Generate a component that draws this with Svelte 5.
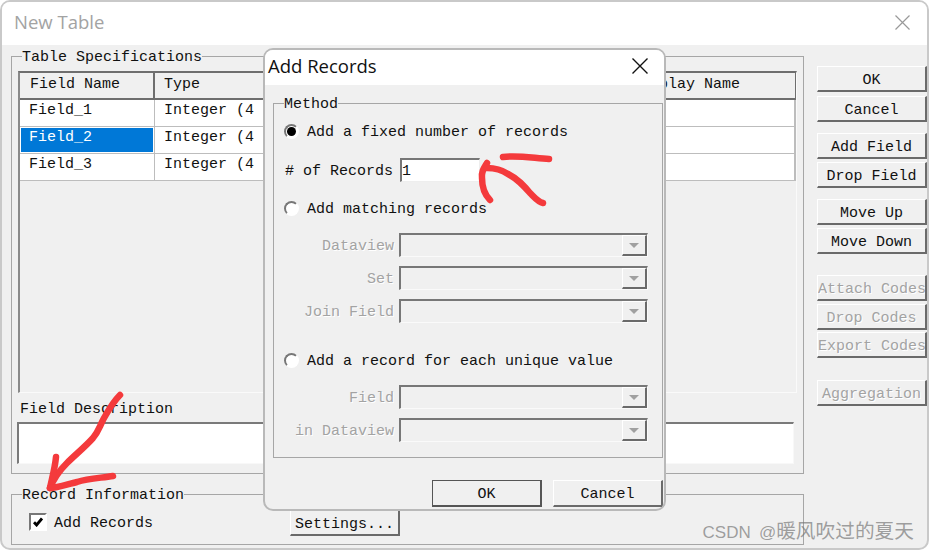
<script>
  const rows = [
    { name: 'Field_1', selected: false },
    { name: 'Field_2', selected: true },
    { name: 'Field_3', selected: false }
  ];
  const sideGroups = [
    { cls: 'g0', items: [{ t: 'OK' }, { t: 'Cancel' }] },
    { cls: 'g1', items: [{ t: 'Add Field' }, { t: 'Drop Field' }] },
    { cls: 'g2', items: [{ t: 'Move Up' }, { t: 'Move Down' }] },
    { cls: 'g3', items: [{ t: 'Attach Codes', d: true }, { t: 'Drop Codes', d: true }, { t: 'Export Codes', d: true }] },
    { cls: 'g4', items: [{ t: 'Aggregation', d: true }] }
  ];
</script>

{#snippet combo(label)}
  <div class="combo-row">
    <span class="combo-label">{label}</span>
    <div class="combo"><span class="combo-arrow"><i></i></span></div>
  </div>
{/snippet}

{#snippet radio(label, on)}
  <div class="radio-row">
    <span class="radio">{#if on}<i></i>{/if}</span>
    <span class="radio-text">{label}</span>
  </div>
{/snippet}

<div class="window">
  <header class="titlebar">
    <span class="win-title">New Table</span>
    <svg class="win-close" width="15" height="15" viewBox="0 0 15 15"><path d="M0.5 0.5L14.5 14.5M14.5 0.5L0.5 14.5" stroke="#999" stroke-width="1.2" fill="none"/></svg>
  </header>

  <div class="body">
    <div class="left">
      <fieldset class="group spec">
        <legend>Table Specifications</legend>
        <div class="table">
          <div class="thead">
            <span class="c1">Field Name</span>
            <span class="c2">Type</span>
            <span class="c3">Display Name</span>
          </div>
          {#each rows as r}
            <div class="trow">
              <span class="c1 cell"><b class:sel={r.selected}>{r.name}</b></span>
              <span class="c2 cell">Integer (4</span>
              <span class="c3 cell"></span>
            </div>
          {/each}
        </div>
        <div class="desc-label">Field Description</div>
        <div class="desc"></div>
      </fieldset>

      <fieldset class="group rec">
        <legend>Record Information</legend>
        <div class="rec-row">
          <span class="check">
            <svg width="10" height="10" viewBox="0 0 10 10"><path d="M1 5.2L3.6 8L9 1.4" stroke="#000" stroke-width="2.8" fill="none"/></svg>
          </span>
          <span class="check-label">Add Records</span>
          <button class="btn">Settings...</button>
        </div>
      </fieldset>
    </div>

    <aside class="side">
      {#each sideGroups as g}
        <div class="side-group {g.cls}">
          {#each g.items as b}
            <button class="btn" class:disabled={b.d}>{b.t}</button>
          {/each}
        </div>
      {/each}
    </aside>
  </div>

  <div class="dialog">
    <header class="dlg-title">
      <span class="dlg-text">Add Records</span>
      <svg width="16" height="16" viewBox="0 0 16 16"><path d="M0.5 0.5L15.5 15.5M15.5 0.5L0.5 15.5" stroke="#111" stroke-width="1.4" fill="none"/></svg>
    </header>
    <fieldset class="group method">
      <legend>Method</legend>
      {@render radio('Add a fixed number of records', true)}
      <div class="count-row">
        <span class="count-label"># of Records</span>
        <div class="count-input">1</div>
      </div>
      <div class="m15">{@render radio('Add matching records', false)}</div>
      <div class="combos">
        {@render combo('Dataview')}
        {@render combo('Set')}
        {@render combo('Join Field')}
      </div>
      <div class="m26">{@render radio('Add a record for each unique value', false)}</div>
      <div class="combos">
        {@render combo('Field')}
        {@render combo('in Dataview')}
      </div>
    </fieldset>
    <footer class="dlg-actions">
      <button class="btn default">OK</button>
      <button class="btn">Cancel</button>
    </footer>
  </div>

  <svg class="ink" width="929" height="550" viewBox="0 0 929 550" aria-hidden="true">
    <g fill="none" stroke="#f43a3c" stroke-width="6.5" stroke-linecap="round" stroke-linejoin="round">
      <path d="M120 395C112 403 108 411 103 420C99 428 98 432 93 438C85 447 75 455 67 463C60 470 54 478 50 488"/>
      <path d="M56 457C55 468 52 478 50 488"/>
      <path d="M50 488C58 488 68 484 77 482C89 478 102 478 113 476"/>
      <path d="M503 157C517 155 533 158 549 159"/>
      <path d="M487 163C484 168 481 172 482 178C482 186 484 194 490 200"/>
      <path d="M487 168C495 168 502 170 508 174C518 179 524 186 530 193C535 198 538 202 543 203"/>
    </g>
  </svg>

  <div class="watermark">CSDN @<span class="wm-cjk">暖风吹过的夏天</span></div>
</div>

<style>
  :global(body) {
    margin: 0;
    background: #fff;
  }
  .window {
    position: relative;
    width: 929px;
    height: 550px;
    box-sizing: border-box;
    border: 2px solid #c9c9c9;
    border-radius: 10px;
    background: #f0f0f0;
    overflow: hidden;
    font: 15px/20px "Liberation Mono", monospace;
    color: #111;
  }
  .titlebar {
    height: 43px;
    box-sizing: border-box;
    background: #fff;
    display: flex;
    align-items: center;
    justify-content: space-between;
    padding: 0 17px 3px 12px;
  }
  .win-title {
    font: 18.5px "Open Sans", sans-serif;
    color: #a3a3a3;
    padding-bottom: 2px;
  }
  .body {
    display: flex;
    padding: 1px 0 0 9px;
    gap: 13px;
  }
  .left {
    width: 793px;
    flex: none;
    display: flex;
    flex-direction: column;
    gap: 10px;
  }
  .group {
    margin: 0;
    padding: 0;
    min-width: 0;
    border: 1px solid #a6a6a6;
  }
  .group legend {
    padding: 4px 0 0;
    margin-left: 10px;
    line-height: 16px;
  }
  .spec {
    height: 428px;
    box-sizing: border-box;
    padding: 5px 6px 0 6px;
  }
  .spec legend {
    margin-left: 4px;
  }
  .table {
    height: 322px;
    box-sizing: border-box;
    border: 1px solid #eee;
    border-top: 2px solid #6e6e6e;
    border-left: 2px solid #8a8a8a;
    border-right: 1px solid #fafafa;
    border-bottom: 1px solid #fafafa;
  }
  .thead,
  .trow {
    display: grid;
    grid-template-columns: 135px 470px 1fr;
    height: 27px;
    box-sizing: border-box;
  }
  .thead {
    background: #f0f0f0;
    border-bottom: 2px solid #6e6e6e;
    line-height: 23px;
  }
  .thead .c1 {
    padding-left: 10px;
    border-right: 2px solid #6e6e6e;
  }
  .thead .c2 {
    padding-left: 9px;
  }
  .thead .c3 {
    padding-left: 5px;
    border-left: 2px solid #6e6e6e;
    border-right: 1px solid #6e6e6e;
  }
  .trow {
    background: #fff;
    border-bottom: 1px solid #bdbdbd;
    border-right: 1px solid #bdbdbd;
    line-height: 20px;
  }
  .cell {
    border-right: 1px solid #bdbdbd;
    padding-left: 9px;
    padding-top: 1px;
  }
  .trow .c1 {
    padding: 0;
    border-right: 1px solid #bdbdbd;
  }
  .trow .c1 b {
    display: block;
    font-weight: 400;
    height: 24px;
    margin: 1px;
    padding-left: 8px;
    box-sizing: border-box;
  }
  .trow .c1 b.sel {
    background: #0078d7;
    color: #fff;
  }
  .desc-label {
    margin: 8px 0 0 2px;
    height: 18px;
    line-height: 18px;
    white-space: nowrap;
  }
  .desc {
    margin: 3px 0 0 -1px;
    width: 777px;
    height: 42px;
    box-sizing: border-box;
    background: #fff;
    border: 1px solid #f8f8f8;
    border-top: 2px solid #7a7a7a;
    border-left: 2px solid #7a7a7a;
  }
  .rec {
    height: 61px;
    box-sizing: border-box;
  }
  .rec-row {
    display: flex;
    align-items: center;
    padding: 6px 0 0 17px;
    height: 26px;
  }
  .check {
    width: 18px;
    height: 18px;
    flex: none;
    margin-top: -2px;
    box-sizing: border-box;
    background: #fff;
    border: 2px solid #fff;
    border-top-color: #777;
    border-left-color: #777;
    display: flex;
    align-items: center;
    justify-content: center;
  }
  .check-label {
    margin-left: 7px;
    width: 236px;
    flex: none;
    padding-top: 2px;
  }
  .btn {
    display: block;
    width: 110px;
    height: 26px;
    padding: 4px 0 0;
    box-sizing: border-box;
    background: #f0f0f0;
    font: inherit;
    line-height: 16px;
    color: #111;
    white-space: nowrap;
    overflow: hidden;
    text-align: center;
    border: 1px solid #fff;
    border-right: 2px solid #6a6a6a;
    border-bottom: 2px solid #6a6a6a;
  }
  .btn.disabled {
    color: #a3a3a3;
    text-shadow: 1px 1px 0 #fff;
  }
  .side {
    width: 110px;
    flex: none;
    padding-top: 20px;
    display: flex;
    flex-direction: column;
  }
  .side-group {
    display: flex;
    flex-direction: column;
    gap: 3px;
  }
  .g0 { gap: 4px; }
  .g1, .g2 { margin-top: 11px; }
  .g3 { margin-top: 21px; }
  .g3 .btn:last-child { margin-top: -1px; }
  .g4 { margin-top: 22px; }

  .dialog {
    position: absolute;
    left: 261px;
    top: 46px;
    width: 403px;
    height: 463px;
    box-sizing: border-box;
    border: 2px solid #b9b9b9;
    border-radius: 10px;
    background: #f0f0f0;
    overflow: hidden;
  }
  .dlg-title {
    height: 35px;
    box-sizing: border-box;
    background: #fff;
    display: flex;
    align-items: center;
    justify-content: space-between;
    padding: 0 16px 3px 3px;
    font: 18.5px "Open Sans", sans-serif;
    color: #111;
  }
  .dlg-text {
    padding-bottom: 2px;
  }
  .method {
    margin: 8px 0 0 8px;
    width: 390px;
    height: 365px;
    box-sizing: border-box;
    padding: 7px 0 0 11px;
  }
  .method legend {
    margin-left: -1px;
  }
  .radio-row {
    display: flex;
    align-items: center;
    height: 22px;
    gap: 8px;
    margin-left: -1px;
    white-space: nowrap;
  }
  .radio {
    width: 15px;
    height: 15px;
    margin-top: 1px;
    border-radius: 50%;
    box-sizing: border-box;
    background: #fff;
    border: 2px solid #fff;
    border-top-color: #777;
    border-left-color: #777;
    display: flex;
    align-items: center;
    justify-content: center;
  }
  .radio i {
    width: 9px;
    height: 9px;
    border-radius: 50%;
    background: #000;
  }
  .radio-text {
    padding-top: 4px;
  }
  .count-row {
    display: flex;
    align-items: center;
    margin-top: 16px;
    height: 24px;
    gap: 7px;
  }
  .count-label {
    padding-top: 4px;
  }
  .count-input {
    width: 80px;
    height: 24px;
    box-sizing: border-box;
    background: #fff;
    padding: 2px 0 0;
    border: 1px solid #eee;
    border-top: 2px solid #777;
    border-left: 2px solid #777;
    line-height: 19px;
  }
  .m15 { margin-top: 15px; }
  .m26 { margin-top: 26px; }
  .combos {
    margin-top: 14px;
    display: flex;
    flex-direction: column;
    gap: 9px;
  }
  .combo-row {
    display: flex;
    align-items: center;
    margin-left: -11px;
    gap: 5px;
  }
  .combo-label {
    width: 120px;
    padding-top: 4px;
    text-align: right;
    color: #a3a3a3;
    text-shadow: 1px 1px 0 #fff;
    white-space: nowrap;
  }
  .combo {
    width: 249px;
    height: 24px;
    box-sizing: border-box;
    background: #f0f0f0;
    border: 1px solid #fafafa;
    border-top: 2px solid #777;
    border-left: 2px solid #777;
    display: flex;
    justify-content: flex-end;
  }
  .combo-arrow {
    width: 25px;
    height: 21px;
    box-sizing: border-box;
    border: 1px solid #fff;
    border-right: 2px solid #6a6a6a;
    border-bottom: 2px solid #6a6a6a;
    display: flex;
    align-items: center;
    justify-content: center;
  }
  .combo-arrow i {
    width: 0;
    height: 0;
    border: 5px solid transparent;
    border-top: 5px solid #a0a0a0;
    border-bottom: 0;
  }
  .dlg-actions {
    display: flex;
    justify-content: flex-end;
    gap: 11px;
    margin-top: 22px;
    padding-right: 1px;
  }
  .dlg-actions .btn {
    height: 27px;
  }
  .btn.default {
    border: 1px solid #555;
    border-right: 2px solid #555;
    border-bottom: 2px solid #555;
  }
  .ink {
    position: absolute;
    left: -2px;
    top: -2px;
    pointer-events: none;
  }
  .watermark {
    position: absolute;
    right: 13px;
    bottom: 4px;
    font: 17px/22px "Liberation Sans", "Noto Sans CJK SC", sans-serif;
    word-spacing: 3.5px;
    color: rgba(120, 120, 120, 0.7);
    white-space: nowrap;
  }
  .wm-cjk {
    font-size: 19.7px;
  }
</style>
